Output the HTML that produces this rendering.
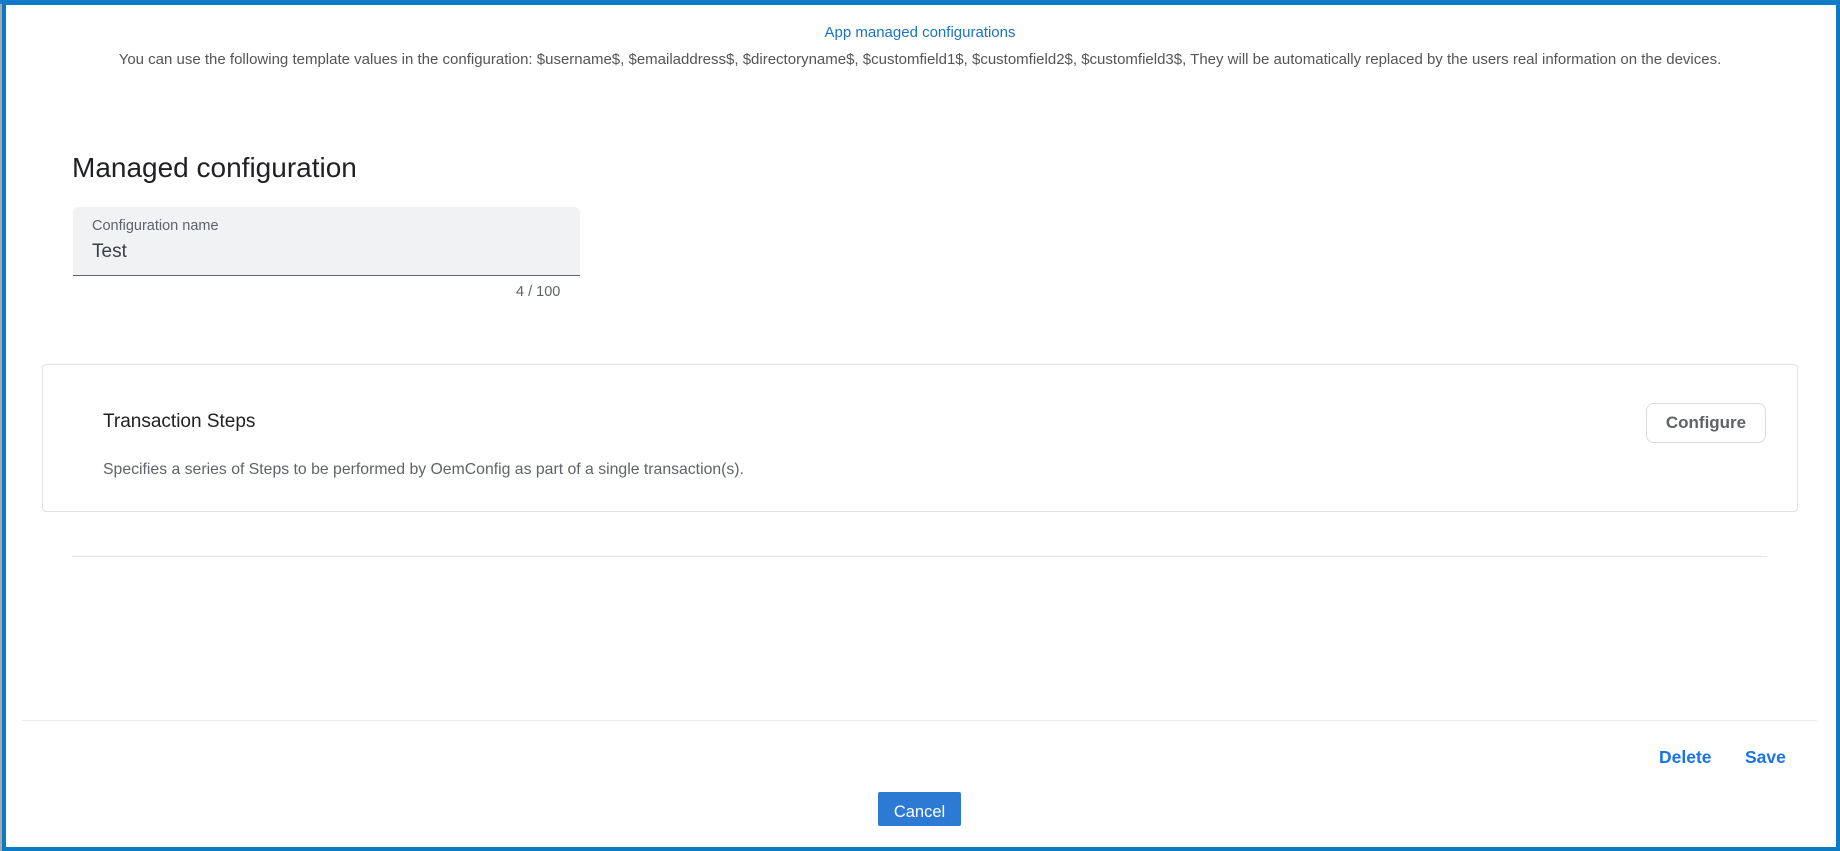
<!DOCTYPE html>
<html><head><style>
body{margin:0;width:1840px;height:850px;background:#a9a9a9;position:relative;overflow:hidden;font-family:"Liberation Sans",Arial,sans-serif;}
.topbar{position:absolute;left:0;top:0;width:1840px;height:4px;background:#1f78cf;}
.frame{position:absolute;left:2px;top:1px;width:1830px;height:842px;border:4px solid #0b7bc3;border-top-width:4px;background:#fff;}
.abs{position:absolute;white-space:nowrap;}
</style></head><body>
<div class="topbar"></div>
<div class="frame"></div>
<div class="abs" style="left:0;width:1840px;top:24px;text-align:center;font-size:15px;color:#1a73c8;">App managed configurations</div>
<div class="abs" style="left:0;width:1840px;top:51px;text-align:center;font-size:15px;color:#555;">You can use the following template values in the configuration: $username$, $emailaddress$, $directoryname$, $customfield1$, $customfield2$, $customfield3$, They will be automatically replaced by the users real information on the devices.</div>
<div class="abs" style="left:72px;top:152px;font-size:28px;color:#202124;">Managed configuration</div>
<div class="abs" style="left:73px;top:207px;width:507px;height:68px;background:#f1f2f4;border-radius:5px 5px 0 0;border-bottom:1.5px solid #5f6368;"></div>
<div class="abs" style="left:92px;top:218px;font-size:14.5px;color:#5f6368;">Configuration name</div>
<div class="abs" style="left:92px;top:241px;font-size:19px;color:#3c4043;">Test</div>
<div class="abs" style="left:516px;top:284px;font-size:14.5px;color:#5f6368;">4 / 100</div>
<div class="abs" style="left:42px;top:364px;width:1754px;height:146px;border:1px solid #e3e3e3;border-radius:4px;"></div>
<div class="abs" style="left:103px;top:411px;font-size:19px;color:#202124;">Transaction Steps</div>
<div class="abs" style="left:103px;top:461px;font-size:15.8px;color:#5f6368;">Specifies a series of Steps to be performed by OemConfig as part of a single transaction(s).</div>
<div class="abs" style="left:1646px;top:403px;width:118px;height:38px;border:1px solid #dadce0;border-radius:8px;text-align:center;line-height:38px;font-size:17px;font-weight:bold;color:#5f6368;">Configure</div>
<div class="abs" style="left:72px;top:556px;width:1695px;height:1px;background:#e3e3e3;"></div>
<div class="abs" style="left:22px;top:720px;width:1795px;height:1px;background:#ececec;"></div>
<div class="abs" style="left:1659px;top:747px;font-size:17.5px;font-weight:bold;color:#1a73e8;">Delete</div>
<div class="abs" style="left:1745px;top:747px;font-size:17.5px;font-weight:bold;color:#1a73e8;">Save</div>
<div class="abs" style="left:878px;top:792px;width:83px;height:34px;background:#2d7ad4;border-radius:2px;text-align:center;line-height:40px;font-size:16.5px;color:#fff;overflow:hidden;">Cancel</div>
</body></html>
